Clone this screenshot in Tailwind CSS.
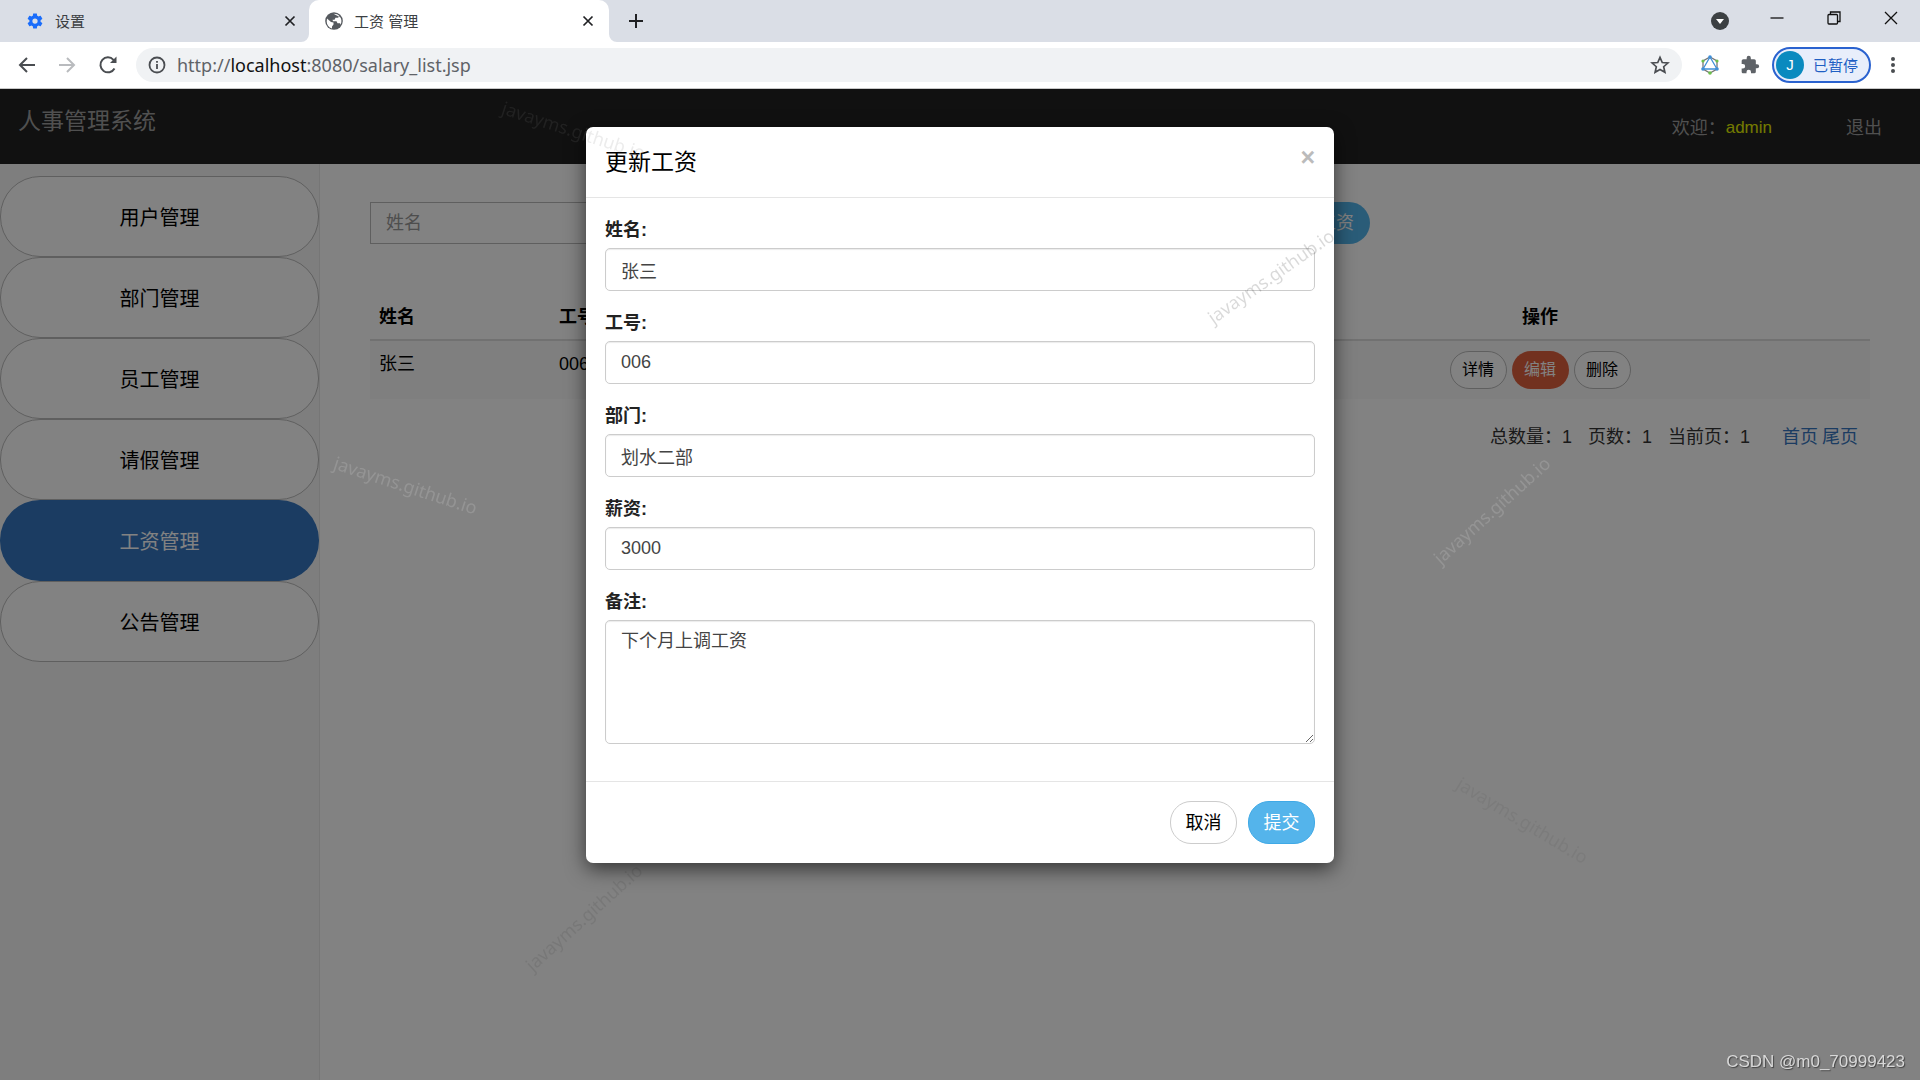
<!DOCTYPE html>
<html lang="zh-CN">

<head>
  <meta charset="UTF-8" />
  <meta name="viewport" content="width=device-width, initial-scale=1" />
  <title>工资 管理</title>
  <script src="https://cdn.jsdelivr.net/npm/@tailwindcss/browser@4"></script>
</head>

<body class="min-h-screen flex flex-col overflow-hidden bg-white text-[18px] leading-6 text-[#333] font-['Liberation_Sans','Noto_Sans_CJK_SC',sans-serif]">

  <!-- Browser tabs -->
  <header class="text-[15px] text-[#3c4043]">
    <div class="flex items-center h-[42px] bg-[#dadee6]">
      <div class="flex items-center w-[301px] h-full pl-[26px] pr-0.5">
        <svg class="size-[18px]" viewBox="0 0 24 24" fill="#1a6dfb"><path d="M19.4 13c0-.3.1-.7.1-1s0-.7-.1-1l2.200-1.700c.2-.2.3-.4.1-.6l-2-3.500c-.1-.2-.4-.3-.6-.2l-2.500 1c-.5-.4-1.100-.7-1.700-1L14.500 2.400c0-.3-.2-.4-.5-.4h-4c-.3 0-.5.1-.5.4L9.100 5c-.6.300-1.200.6-1.700 1l-2.500-1c-.2-.1-.5 0-.6.2l-2 3.500c-.1.2-.1.5.1.6L4.600 11c0 .3-.1.7-.1 1s0 .7.1 1l-2.200 1.700c-.2.2-.2.4-.1.6l2 3.500c.1.2.4.3.6.2l2.500-1c.5.4 1.100.7 1.700 1l.4 2.600c0 .3.2.4.5.4h4c.3 0 .5-.1.5-.4l.4-2.600c.6-.3 1.200-.6 1.700-1l2.500 1c.2.1.5 0 .6-.2l2-3.500c.1-.2.1-.5-.1-.6zM12 15.500a3.500 3.500 0 1 1 0-7 3.500 3.500 0 0 1 0 7z" /></svg>
        <span class="ml-[11px] pt-0.5">设置</span>
        <button class="ml-auto" aria-label="关闭标签页"><svg class="size-[18px]" viewBox="0 0 18 18" stroke="#202124" stroke-width="1.700"><path d="M4.500 4.500l9 9M13.500 4.500l-9 9" /></svg></button>
      </div>
      <svg class="w-2 h-2 self-end" viewBox="0 0 8 8" fill="#fff"><path d="M8 0v8H0a8 8 0 0 0 8-8z" /></svg>
      <div class="flex items-center w-[300px] h-full px-3 pl-4 rounded-t-[10px] bg-white">
        <svg class="size-[18px]" viewBox="0 0 18 18"><circle cx="9" cy="9" r="8.800" fill="#55595e" /><path d="M2 6.500l4 3.500 2.500.5v2L7 14.500v2C3.500 15.500 1.700 12.500 1.700 9.500zM8.500 1.800c3 0 4.500.7 6 2.500l-1.500 1.500h-2.500l-1 2H7.500l.5 1.500h3.500l1 2h2.500l.5 1.500c1.500-2.800 1-5.500 0-7.200" fill="#fff" /></svg>
        <span class="ml-[11px] pt-0.5">工资 管理</span>
        <button class="ml-auto" aria-label="关闭标签页"><svg class="size-[18px]" viewBox="0 0 18 18" stroke="#202124" stroke-width="1.700"><path d="M4.500 4.500l9 9M13.500 4.500l-9 9" /></svg></button>
      </div>
      <svg class="w-2 h-2 self-end" viewBox="0 0 8 8" fill="#fff"><path d="M0 0v8h8a8 8 0 0 1-8-8z" /></svg>
      <button class="ml-[10px]" aria-label="新标签页"><svg class="size-[18px]" viewBox="0 0 18 18" stroke="#202124" stroke-width="2"><path d="M9 2v14M2 9h14" /></svg></button>

      <div class="flex items-center ml-auto pr-5 gap-[39px]">
        <svg class="size-[18px]" viewBox="0 0 18 18"><circle cx="9" cy="9" r="9" fill="#3c4043" /><path d="M5 7h8l-4 5z" fill="#fff" /></svg>
        <button aria-label="最小化"><svg class="size-[18px] mb-1.5" viewBox="0 0 18 18" stroke="#111" stroke-width="1.300"><path d="M2.500 9h13" /></svg></button>
        <button aria-label="还原"><svg class="size-[18px] mb-1.5" viewBox="0 0 18 18" fill="none" stroke="#111" stroke-width="1.300"><rect x="3" y="5.500" width="9.500" height="9.500" rx="1" /><path d="M5.500 5.500V3h9.500v9.500h-2.500" /></svg></button>
        <button aria-label="关闭"><svg class="size-[18px] mb-1.5" viewBox="0 0 18 18" stroke="#111" stroke-width="1.300"><path d="M3 3l12 12M15 3L3 15" /></svg></button>
      </div>
    </div>

    <!-- Toolbar -->
    <div class="flex items-center h-[47px] px-[17px] border-b border-[#c8c8c8] bg-white">
      <button aria-label="后退"><svg class="size-5" viewBox="0 0 20 20" fill="none" stroke="#4a4d51" stroke-width="2"><path d="M18 10H3.500M10 3l-7 7 7 7" /></svg></button>
      <button class="ml-5" aria-label="前进"><svg class="size-5" viewBox="0 0 20 20" fill="none" stroke="#b9bbbe" stroke-width="2"><path d="M2 10h14.500M10 3l7 7-7 7" /></svg></button>
      <button class="ml-[21px]" aria-label="重新加载"><svg class="size-5" viewBox="0 0 20 20" fill="none" stroke="#4a4d51" stroke-width="2"><path d="M16.500 13.500A7.500 7.500 0 1 1 15.500 4.800L17 6.500" /><path d="M18.500 1.500V8H12z" fill="#4a4d51" stroke="none" /></svg></button>
      <div class="flex items-center flex-1 h-[34px] ml-[18px] pl-3 pr-3 rounded-full bg-[#f0f2f4]">
        <svg class="size-[18px]" viewBox="0 0 18 18" fill="none" stroke="#4a4d51" stroke-width="1.800"><circle cx="9" cy="9" r="7.500" /><path d="M9 8v5M9 5v1.800" /></svg>
        <div class="flex-1 ml-[11px] text-[18px] text-[#5f6368] font-['Noto_Sans',sans-serif]">http://<span class="text-[#111]">localhost</span>:8080/salary_list.jsp</div>
        <button aria-label="收藏"><svg class="size-5" viewBox="0 0 24 24" fill="none" stroke="#4a4d51" stroke-width="2"><path d="M12 2.800l2.700 6.200 6.800.6-5.100 4.500 1.500 6.700-5.900-3.500-5.900 3.500 1.500-6.700L2.500 9.600l6.800-.6z" /></svg></button>
      </div>
      <svg class="size-5 ml-[18px]" viewBox="0 0 20 20" fill="none"><path d="M10 2l7 4v8l-7 4-7-4V6z" stroke="#777" stroke-width="1.300" /><path d="M10 2l7 12H3z" stroke="#3f8fd8" stroke-width="1.300" /><g fill="#3f8fd8"><circle cx="10" cy="2" r="1.800" /><circle cx="3" cy="14" r="1.800" /><circle cx="17" cy="14" r="1.800" /></g><g fill="#6bbf4b"><circle cx="3" cy="6" r="1.600" /><circle cx="17" cy="6" r="1.600" /><circle cx="10" cy="18" r="1.800" /></g></svg>
      <svg class="size-5 ml-5" viewBox="0 0 24 24" fill="#5f6368"><path d="M20.500 11H19V7a2 2 0 0 0-2-2h-4V3.500a2.500 2.500 0 0 0-5 0V5H4a2 2 0 0 0-2 2v3.800h1.500a2.700 2.700 0 0 1 0 5.400H2V20c0 1.100.9 2 2 2h3.800v-1.500a2.700 2.700 0 0 1 5.400 0V22H17a2 2 0 0 0 2-2v-4h1.500a2.500 2.500 0 0 0 0-5z" /></svg>
      <button class="flex items-center h-9 w-[99px] ml-3 pl-0.5 gap-[9px] rounded-full border-2 border-[#2a62cf] bg-[#e8eefb] text-[#1f5fc4]">
        <span class="flex items-center justify-center size-7 rounded-full bg-[#0a8abf] text-white">J</span>
        <span class="pt-0.5">已暂停</span>
      </button>
      <button class="ml-3" aria-label="菜单"><svg class="size-5" viewBox="0 0 20 20" fill="#4a4d51"><circle cx="10" cy="4" r="2" /><circle cx="10" cy="10" r="2" /><circle cx="10" cy="16" r="2" /></svg></button>
    </div>
  </header>

  <div class="relative flex flex-col flex-1">
    <nav class="flex justify-between h-[75px] pl-[18px] pr-[38px] bg-[#222] text-[#9d9d9d]">
      <a href="#" class="pt-5 text-[23px]">人事管理系统</a>
      <div class="flex items-center pt-0.5">
        <span>欢迎：</span><a href="#" class="text-[17px] text-[#e2f000]">admin</a>
        <a href="#" class="ml-[74px]">退出</a>
      </div>
    </nav>

    <div class="flex flex-1">
      <aside class="w-80 pt-3 border-r border-[#e7e7e7] bg-[#f8f8f8]">
        <ul class="text-center text-[20px] text-black">
          <li><a href="#" class="flex items-center justify-center h-[81px] pt-0.5 rounded-[40px] border border-[#bbb] bg-white">用户管理</a></li>
          <li><a href="#" class="flex items-center justify-center h-[81px] pt-0.5 rounded-[40px] border border-[#bbb] bg-white">部门管理</a></li>
          <li><a href="#" class="flex items-center justify-center h-[81px] pt-0.5 rounded-[40px] border border-[#bbb] bg-white">员工管理</a></li>
          <li><a href="#" class="flex items-center justify-center h-[81px] pt-0.5 rounded-[40px] border border-[#bbb] bg-white">请假管理</a></li>
          <li><a href="#" class="flex items-center justify-center h-[81px] pt-0.5 rounded-[40px] bg-[#3576c0] text-white">工资管理</a></li>
          <li><a href="#" class="flex items-center justify-center h-[81px] pt-0.5 rounded-[40px] border border-[#bbb] bg-white">公告管理</a></li>
        </ul>
      </aside>

      <main class="flex-1 pt-[38px] px-[50px]">
        <form class="flex justify-between w-2/3">
          <input type="text" placeholder="姓名" aria-label="姓名" class="h-[42px] w-[300px] px-[15px] border border-[#bbb] placeholder:text-[#999]" />
          <button type="button" class="h-[42px] px-4 rounded-[21px] bg-[#54b4eb] text-white">添加工资</button>
        </form>

        <table class="w-full mt-[51px] table-fixed text-left">
          <thead>
            <tr class="border-b-2 border-[#ddd] text-black">
              <th class="w-[12%] px-[9px] py-[10px]">姓名</th>
              <th class="w-[12%] px-[9px]">工号</th>
              <th class="w-[16%] px-[9px]">部门</th>
              <th class="w-[16%] px-[9px]">薪资</th>
              <th class="w-[44%] px-[9px] text-center">操作</th>
            </tr>
          </thead>
          <tbody>
            <tr class="bg-[#f9f9f9] text-black align-top">
              <td class="px-[9px] py-[11px]">张三</td>
              <td class="px-[9px] py-[11px]">006</td>
              <td class="px-[9px] py-[11px]">划水二部</td>
              <td class="px-[9px] py-[11px]">3000</td>
              <td class="px-[9px] py-[10px]">
                <div class="flex justify-center gap-[5px] text-[16px]">
                  <button class="w-[57px] h-[38px] rounded-[19px] border border-[#bbb] bg-white">详情</button>
                  <button class="w-[57px] h-[38px] rounded-[19px] bg-[#e0603e] text-white">编辑</button>
                  <button class="w-[57px] h-[38px] rounded-[19px] border border-[#bbb] bg-white">删除</button>
                </div>
              </td>
            </tr>
          </tbody>
        </table>

        <div class="flex justify-end gap-4 mt-[26px] pr-3">
          <span>总数量：1</span>
          <span>页数：1</span>
          <span>当前页：1</span>
          <span class="flex gap-1 ml-4 text-[#3576c0]"><a href="#">首页</a><a href="#">尾页</a></span>
        </div>
      </main>
    </div>

    <!-- Modal -->
    <div class="absolute inset-0 pt-[38px] bg-black/49">
      <div class="w-[748px] mx-auto rounded-[7px] bg-white shadow-[0_6px_20px_rgba(0,0,0,0.6)]">
        <div class="flex justify-between items-start h-[71px] px-[19px] border-b border-[#e5e5e5]">
          <h4 class="mt-[23px] text-[23px] text-black">更新工资</h4>
          <button class="mt-[18px] text-[25px] font-bold text-[#bbb]" aria-label="关闭">×</button>
        </div>
        <form id="salaryForm" class="px-[19px] pt-[18px] pb-[37px]">
          <div class="mb-[18px]">
            <label for="name" class="block h-8 pt-0.5 font-bold text-[#222]">姓名:</label>
            <input id="name" type="text" value="张三" class="block w-full h-[43px] px-[15px] rounded-[5px] border border-[#ccc] text-[#444] shadow-[inset_0_1px_1px_rgba(0,0,0,0.08)]" />
          </div>
          <div class="mb-[18px]">
            <label for="code" class="block h-8 pt-0.5 font-bold text-[#222]">工号:</label>
            <input id="code" type="text" value="006" class="block w-full h-[43px] px-[15px] rounded-[5px] border border-[#ccc] text-[#444] shadow-[inset_0_1px_1px_rgba(0,0,0,0.08)]" />
          </div>
          <div class="mb-[18px]">
            <label for="dept" class="block h-8 pt-0.5 font-bold text-[#222]">部门:</label>
            <input id="dept" type="text" value="划水二部" class="block w-full h-[43px] px-[15px] rounded-[5px] border border-[#ccc] text-[#444] shadow-[inset_0_1px_1px_rgba(0,0,0,0.08)]" />
          </div>
          <div class="mb-[18px]">
            <label for="pay" class="block h-8 pt-0.5 font-bold text-[#222]">薪资:</label>
            <input id="pay" type="text" value="3000" class="block w-full h-[43px] px-[15px] rounded-[5px] border border-[#ccc] text-[#444] shadow-[inset_0_1px_1px_rgba(0,0,0,0.08)]" />
          </div>
          <div>
            <label for="note" class="block h-8 pt-0.5 font-bold text-[#222]">备注:</label>
            <textarea id="note" class="block w-full h-[124px] px-[15px] py-2 rounded-[5px] border border-[#ccc] text-[#444] shadow-[inset_0_1px_1px_rgba(0,0,0,0.08)]">下个月上调工资</textarea>
          </div>
        </form>
        <div class="flex justify-end gap-[11px] px-[19px] py-[19px] border-t border-[#e5e5e5]">
          <button class="w-[67px] h-[43px] rounded-[21px] border border-[#ccc] bg-white text-black">取消</button>
          <button form="salaryForm" class="w-[67px] h-[43px] rounded-[21px] border border-[#3fa9e6] bg-[#54b4eb] text-white">提交</button>
        </div>
      </div>
    </div>
  </div>

  <!-- Watermarks -->
  <div class="fixed inset-0 pointer-events-none text-[18px] leading-6 font-['Noto_Sans',sans-serif]">
    <span class="absolute left-[499px] top-[118px] rotate-[18deg] text-[#808080]/15">javayms.github.io</span>
    <span class="absolute left-[331px] top-[473px] rotate-[18deg] text-white/15">javayms.github.io</span>
    <span class="absolute left-[1196px] top-[264px] rotate-[-35deg] text-black/15">javayms.github.io</span>
    <span class="absolute left-[1417px] top-[498px] rotate-[-42deg] text-white/15">javayms.github.io</span>
    <span class="absolute left-[509px] top-[905px] rotate-[-42deg] text-black/8">javayms.github.io</span>
    <span class="absolute left-[1448px] top-[808px] rotate-[31deg] text-black/5">javayms.github.io</span>
    <span class="absolute right-[15px] bottom-1.5 text-[17px] text-[#d8d8d8] [text-shadow:1px_1px_1px_#444] font-['Liberation_Sans',sans-serif]">CSDN @m0_70999423</span>
  </div>

</body>

</html>
